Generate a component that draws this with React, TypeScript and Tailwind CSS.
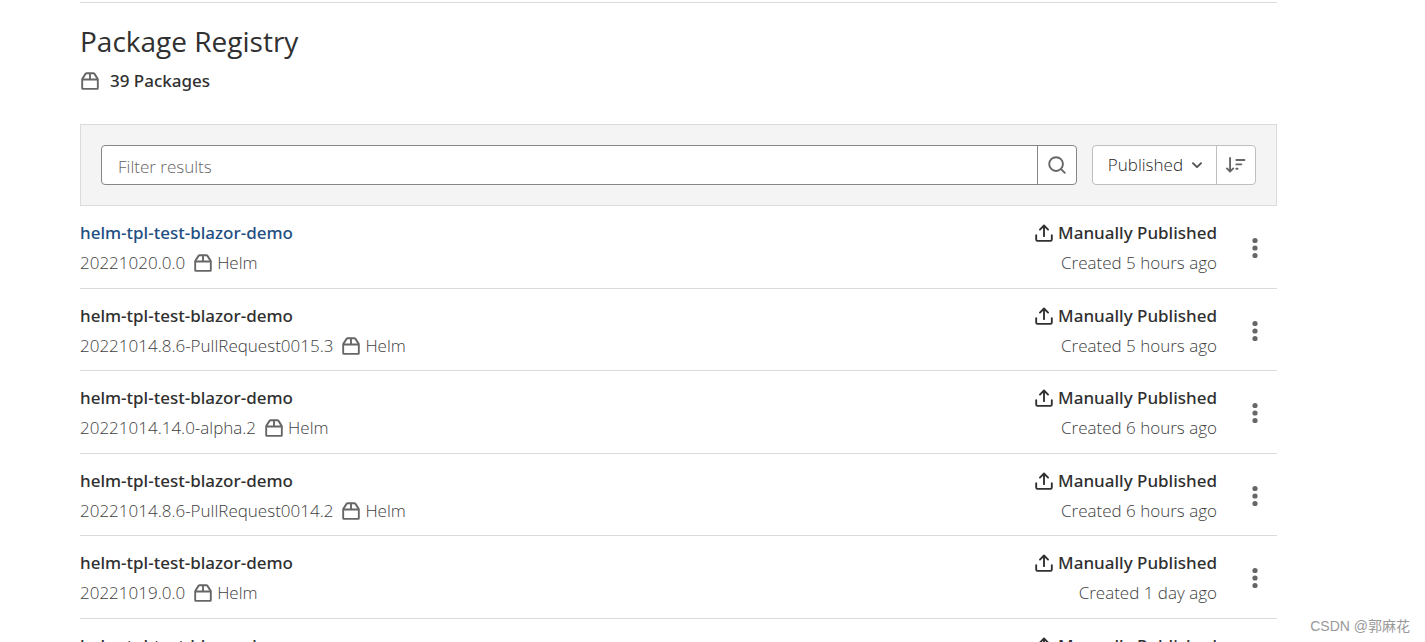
import React, { useState } from 'react';

type Package = {
  name: string;
  version: string;
  created: string;
  active?: boolean;
};

const packages: Package[] = [
  { name: 'helm-tpl-test-blazor-demo', version: '20221020.0.0', created: '5 hours ago', active: true },
  { name: 'helm-tpl-test-blazor-demo', version: '20221014.8.6-PullRequest0015.3', created: '5 hours ago' },
  { name: 'helm-tpl-test-blazor-demo', version: '20221014.14.0-alpha.2', created: '6 hours ago' },
  { name: 'helm-tpl-test-blazor-demo', version: '20221014.8.6-PullRequest0014.2', created: '6 hours ago' },
  { name: 'helm-tpl-test-blazor-demo', version: '20221019.0.0', created: '1 day ago' },
  { name: 'helm-tpl-test-blazor-demo', version: '20221018.0.0', created: '1 day ago' },
];

const PackageIcon: React.FC = () => (
  <svg viewBox="0 0 16 16" className="size-5 shrink-0 text-[#666]" fill="none" stroke="currentColor" strokeWidth="1.5" strokeLinejoin="round" aria-hidden="true">
    <path d="M1.75 6.5 4.4 2.3q.35-.55 1-.55h5.2q.65 0 1 .55l2.65 4.2v7.25q0 .5-.5.5H2.25q-.5 0-.5-.5z" />
    <path d="M1.75 6.75h12.5M8 1.75v5" />
  </svg>
);

const UploadIcon: React.FC = () => (
  <svg viewBox="0 0 16 16" className="size-5 shrink-0" fill="none" stroke="currentColor" strokeWidth="1.5" strokeLinecap="round" strokeLinejoin="round" aria-hidden="true">
    <path d="M8 10.5V2.25M4.75 5.25 8 2l3.25 3.25" />
    <path d="M1.75 9.75v3.5a1 1 0 0 0 1 1h10.5a1 1 0 0 0 1-1v-3.5" />
  </svg>
);

const SearchIcon: React.FC = () => (
  <svg viewBox="0 0 16 16" className="size-5" fill="none" stroke="currentColor" strokeWidth="1.5" strokeLinecap="round" aria-hidden="true">
    <circle cx="7.25" cy="7.25" r="5.5" />
    <path d="m11.25 11.25 3 3" />
  </svg>
);

const ChevronIcon: React.FC = () => (
  <svg viewBox="0 0 16 16" className="size-5" fill="none" stroke="currentColor" strokeWidth="1.5" strokeLinecap="round" strokeLinejoin="round" aria-hidden="true">
    <path d="M4.75 6.5 8 9.75l3.25-3.25" />
  </svg>
);

const SortLowestIcon: React.FC = () => (
  <svg viewBox="0 0 16 16" className="size-5" fill="none" stroke="currentColor" strokeWidth="1.5" strokeLinecap="round" strokeLinejoin="round" aria-hidden="true">
    <path d="M3.25 2.25v10.5M.75 10.75l2.5 2.5 2.5-2.5" />
    <path d="M8.25 4h6.5M8.25 7.5h4M8.25 11h1" />
  </svg>
);

const MoreIcon: React.FC = () => (
  <svg viewBox="0 0 20 24" className="h-6 w-5" fill="currentColor" aria-hidden="true">
    <circle cx="10" cy="4.5" r="2.6" />
    <circle cx="10" cy="12" r="2.6" />
    <circle cx="10" cy="19.5" r="2.6" />
  </svg>
);

const PackageRow: React.FC<{ pkg: Package }> = ({ pkg }) => (
  <li className="flex items-center border-b border-[#dbdbdb] pt-3 pb-[9px] odd:pb-[10px]">
    <div className="min-w-0 flex-1">
      <div className="flex h-[30px] items-center justify-between font-['Noto_Sans','Open_Sans',sans-serif] font-medium">
        <a href="#package" className={pkg.active ? 'text-[#1f4f82]' : 'text-[#303030]'}>
          {pkg.name}
        </a>
        <span className="flex items-center gap-1 text-[#303030]">
          <UploadIcon />
          Manually Published
        </span>
      </div>
      <div className="flex h-[30px] items-center justify-between font-light text-[#404040]">
        <span className="flex items-center">
          {pkg.version}
          <span className="ml-2 flex items-center gap-1">
            <PackageIcon />
            Helm
          </span>
        </span>
        <span>Created {pkg.created}</span>
      </div>
    </div>
    <button type="button" aria-label="More actions" className="ml-[28px] mr-3 text-[#666]">
      <MoreIcon />
    </button>
  </li>
);

export default function App() {
  const [filter, setFilter] = useState('');

  return (
    <div className="relative h-screen overflow-hidden bg-white pt-[2px] pr-[148px] pl-20 font-['Open_Sans','Noto_Sans',sans-serif] text-[17px] leading-[24px] text-[#303030]">
      <main className="border-t border-[#dbdbdb]">
        {/* Title */}
        <h1 className="pt-5 text-[28px] leading-[36px]">Package Registry</h1>
        <div className="mt-[10px] flex items-center gap-[10px] font-['Noto_Sans','Open_Sans',sans-serif] font-medium">
          <PackageIcon />
          39 Packages
        </div>

        {/* Filter and sort */}
        <div className="mt-[31px] flex items-center gap-[15px] border border-[#dbdbdb] bg-[#f4f4f4] p-5">
          <form className="flex h-10 min-w-0 flex-1 rounded border border-[#868686] bg-white" onSubmit={(e) => e.preventDefault()}>
            <input
              type="text"
              aria-label="Filter results"
              placeholder="Filter results"
              value={filter}
              onChange={(e) => setFilter(e.target.value)}
              className="min-w-0 flex-1 px-4 pt-1 font-light outline-none placeholder:text-[#666]"
            />
            <button type="submit" aria-label="Search" className="flex w-[39px] items-center justify-center border-l border-[#868686] text-[#666]">
              <SearchIcon />
            </button>
          </form>
          <div className="flex h-10 rounded border border-[#bfbfbf] bg-white">
            <button type="button" className="flex items-center gap-1 pr-[9px] pl-[15px] font-light text-[#1f1f1f]">
              Published
              <span className="text-[#525252]">
                <ChevronIcon />
              </span>
            </button>
            <button type="button" aria-label="Sort direction" className="flex w-[39px] items-center justify-center border-l border-[#bfbfbf] text-[#666]">
              <SortLowestIcon />
            </button>
          </div>
        </div>

        {/* Packages */}
        <ul>
          {packages.map((pkg) => (
            <PackageRow key={pkg.version} pkg={pkg} />
          ))}
        </ul>
      </main>

      <p className="absolute right-[15px] bottom-[4px] font-['Liberation_Sans','Noto_Sans_CJK_SC',sans-serif] text-[14px] leading-[24px] text-[#999]">
        CSDN @郭麻花
      </p>
    </div>
  );
}
